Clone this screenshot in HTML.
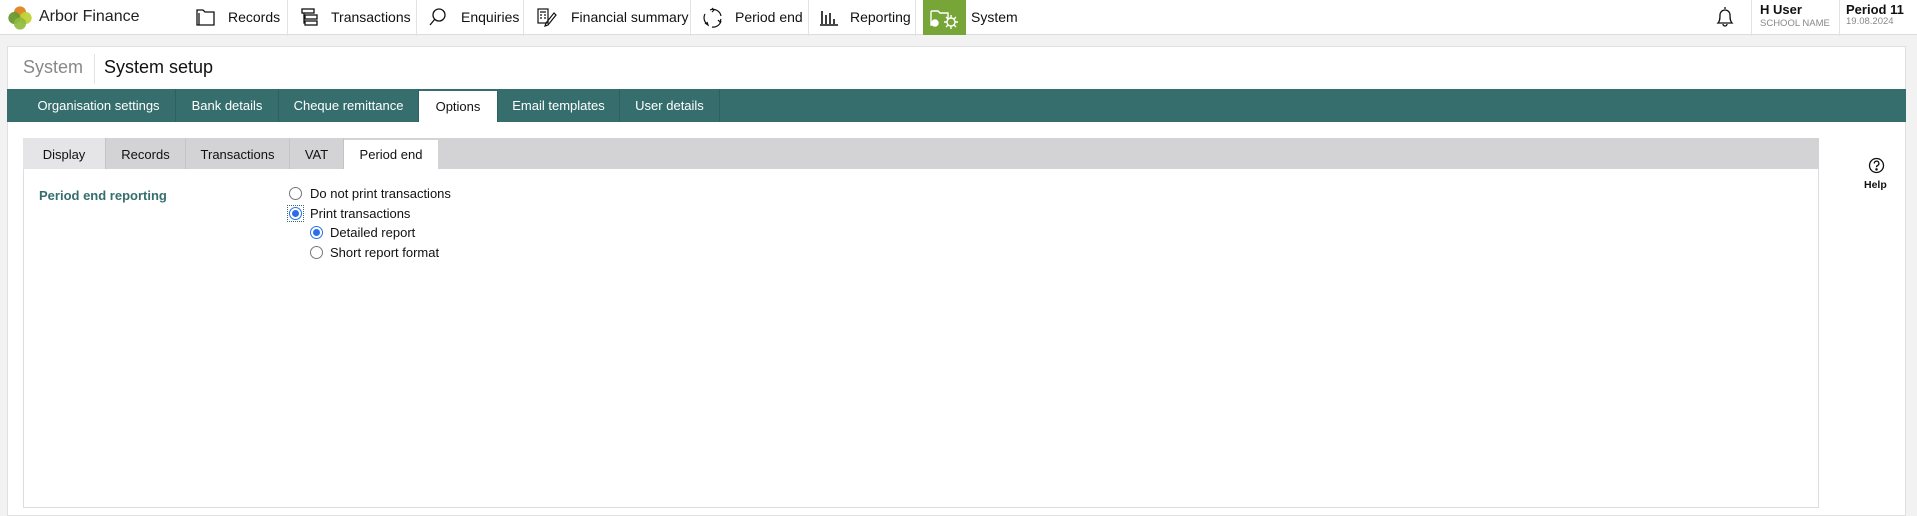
<!DOCTYPE html>
<html><head><meta charset="utf-8">
<style>
*{box-sizing:border-box;margin:0;padding:0}
body{width:1917px;height:501px;overflow:hidden;background:#f2f2f2;font-family:"Liberation Sans",Arial,sans-serif;color:#111;position:relative}
.nav{position:absolute;left:0;top:0;width:1917px;height:35px;background:#fff;border-bottom:1px solid #ddd}
.a{position:absolute;font-size:14px;top:9px;white-space:nowrap}
.sep{position:absolute;top:0;width:1px;height:36px;background:#e3e3e3}
.ic{position:absolute;top:7px}
.card{position:absolute;left:7px;top:46px;width:1899px;height:470px;background:#fff;border:1px solid #e0e0e0}
.tbar{position:absolute;left:7px;top:89px;width:1899px;height:33px;background:#366e6e}
.t{position:absolute;top:0;height:33px;line-height:33px;color:#fff;font-size:13px;text-align:center;border-right:1px solid #2e6060}
.t.on{background:#fff;color:#111;top:2px;height:31px;line-height:31px}
.panel{position:absolute;left:23px;top:138px;width:1796px;height:370px;border:1px solid #ddd;border-top:none;background:#fff}
.sbar{position:absolute;left:23px;top:138px;width:1796px;height:31px;background:#d3d2d5}
.s{position:absolute;top:0;height:31px;line-height:33px;font-size:13px;text-align:center;border-right:1px solid #c4c3c6}
.s.on{background:#fff;top:2px;height:30px;line-height:30px;border-right:none}
.r{position:absolute;width:13px;height:13px;border:1px solid #777;border-radius:50%;background:#fff}
.r.c{border:1px solid #2a6fe8}
.r.c::after{content:"";position:absolute;left:2px;top:2px;width:7px;height:7px;border-radius:50%;background:#2a6fe8}
.lbl{position:absolute;font-size:13px;white-space:nowrap}
</style></head><body>
<div class="nav">
<svg style="position:absolute;left:6px;top:4px" width="28" height="28" viewBox="0 0 30 30">
<circle cx="15" cy="9" r="6.5" fill="#e08a2c"/>
<circle cx="21" cy="15" r="6.5" fill="#bfd13a" opacity=".95"/>
<circle cx="9" cy="15" r="6.5" fill="#6a9a32" opacity=".95"/>
<circle cx="15" cy="21" r="6.5" fill="#8fba3c" opacity=".9"/>
</svg>
<div class="a" style="left:39px;font-size:16px;top:8px;color:#222">Arbor Finance</div>

<svg class="ic" style="left:195px" width="22" height="20" viewBox="0 0 22 20" fill="none" stroke="#111" stroke-width="1.3"><path d="M2 3h6l2 2h9v13H2z"/><path d="M4 18V6"/></svg>
<div class="a" style="left:228px">Records</div>
<div class="sep" style="left:287px"></div>
<svg class="ic" style="left:300px" width="20" height="20" viewBox="0 0 20 20" fill="none" stroke="#111" stroke-width="1.3"><rect x="2" y="2" width="12" height="4"/><rect x="5" y="8" width="12" height="4"/><rect x="5" y="14" width="12" height="4"/><path d="M4 6v10h1"/></svg>
<div class="a" style="left:331px">Transactions</div>
<div class="sep" style="left:416px"></div>
<svg class="ic" style="left:428px" width="20" height="20" viewBox="0 0 20 20" fill="none" stroke="#111" stroke-width="1.3"><circle cx="11" cy="8" r="6"/><path d="M7 12l-5 6"/></svg>
<div class="a" style="left:461px">Enquiries</div>
<div class="sep" style="left:523px"></div>
<svg class="ic" style="left:536px" width="22" height="22" viewBox="0 0 22 22" fill="none" stroke="#111" stroke-width="1.2"><rect x="2" y="2" width="10" height="14"/><path d="M4 5h6M4 8h2M8 8h2M4 11h2M8 11h2"/><path d="M18 6l2 2-8 10-3 1 1-3z"/></svg>
<div class="a" style="left:571px">Financial summary</div>
<div class="sep" style="left:690px"></div>
<svg class="ic" style="left:702px" width="22" height="22" viewBox="0 0 22 22" fill="none" stroke="#111" stroke-width="1.2"><path d="M8 3a8 8 0 0 1 11 6"/><path d="M19 14a8 8 0 0 1-9 6"/><path d="M5 17a8 8 0 0 1-2-10"/><path d="M10 1l2 2-2 2M19 12l-1 3-2-2M3 16l3 2-1-3"/></svg>
<div class="a" style="left:735px">Period end</div>
<div class="sep" style="left:808px"></div>
<svg class="ic" style="left:819px" width="20" height="20" viewBox="0 0 20 20" fill="none" stroke="#111" stroke-width="1.6"><path d="M3 4v13M7 8v9M11 6v11M15 12v5M1 18h18"/></svg>
<div class="a" style="left:850px">Reporting</div>
<div class="sep" style="left:915px"></div>
<div style="position:absolute;left:923px;top:0;width:43px;height:35px;background:#77a537"></div>
<svg class="ic" style="left:929px;top:6px" width="32" height="24" viewBox="0 0 32 24" fill="none" stroke="#fff" stroke-width="1.4"><path d="M2 5h7l2 2h8v5"/><path d="M2 5v14h5"/><circle cx="6" cy="17" r="3" fill="#fff"/><circle cx="22" cy="16" r="4"/><path d="M22 9v3M22 20v3M15 16h3M26 16h3M17 11l2 2M25 19l2 2M27 11l-2 2M19 19l-2 2"/></svg>
<div class="a" style="left:971px">System</div>

<svg style="position:absolute;left:1714px;top:5px" width="22" height="24" viewBox="0 0 22 24" fill="none" stroke="#111" stroke-width="1.3"><path d="M11 2v2M4 18c2-2 2-5 2-8a5 5 0 0 1 10 0c0 3 0 6 2 8z"/><path d="M9 19a2 2 0 0 0 4 0"/></svg>
<div class="sep" style="left:1751px"></div>
<div style="position:absolute;left:1760px;top:2px;font-size:13px;font-weight:bold">H User</div>
<div style="position:absolute;left:1760px;top:18px;font-size:9.5px;color:#888">SCHOOL NAME</div>
<div class="sep" style="left:1839px"></div>
<div style="position:absolute;left:1846px;top:2px;font-size:13px;font-weight:bold">Period 11</div>
<div style="position:absolute;left:1846px;top:16px;font-size:9.5px;color:#888">19.08.2024</div>
</div>

<div class="card"></div>
<div style="position:absolute;left:23px;top:57px;font-size:18px;color:#888">System</div>
<div style="position:absolute;left:94px;top:54px;width:1px;height:30px;background:#e3e3e3"></div>
<div style="position:absolute;left:104px;top:57px;font-size:18px;color:#111">System setup</div>

<div class="tbar">
<div class="t" style="left:15px;width:154px">Organisation settings</div>
<div class="t" style="left:169px;width:103px">Bank details</div>
<div class="t" style="left:272px;width:140px">Cheque remittance</div>
<div class="t on" style="left:412px;width:79px">Options</div>
<div class="t" style="left:491px;width:122px">Email templates</div>
<div class="t" style="left:613px;width:100px">User details</div>
</div>

<div class="panel"></div>
<div class="sbar">
<div class="s" style="left:0;width:83px;background:#e5e4e6">Display</div>
<div class="s" style="left:83px;width:80px">Records</div>
<div class="s" style="left:163px;width:104px">Transactions</div>
<div class="s" style="left:267px;width:54px">VAT</div>
<div class="s on" style="left:321px;width:94px">Period end</div>
</div>

<div style="position:absolute;left:39px;top:188px;font-size:13px;font-weight:bold;color:#366e6e">Period end reporting</div>
<div class="r" style="left:289px;top:187px"></div><div class="lbl" style="left:310px;top:186px">Do not print transactions</div>
<div style="position:absolute;left:287px;top:205px;width:17px;height:17px;border:1px dotted #366e6e"></div>
<div class="r c" style="left:289px;top:207px"></div><div class="lbl" style="left:310px;top:206px">Print transactions</div>
<div class="r c" style="left:310px;top:226px"></div><div class="lbl" style="left:330px;top:225px">Detailed report</div>
<div class="r" style="left:310px;top:246px"></div><div class="lbl" style="left:330px;top:245px">Short report format</div>

<svg style="position:absolute;left:1868px;top:157px" width="17" height="17" viewBox="0 0 17 17" fill="none" stroke="#111" stroke-width="1.3"><circle cx="8.5" cy="8.5" r="7"/><path d="M6.3 6.5a2.3 2.3 0 1 1 3.3 2c-.8.4-1.1.9-1.1 1.7"/><circle cx="8.5" cy="12.4" r=".6" fill="#111"/></svg>
<div style="position:absolute;left:1864px;top:179px;font-size:10.5px;font-weight:bold">Help</div>
</body></html>
